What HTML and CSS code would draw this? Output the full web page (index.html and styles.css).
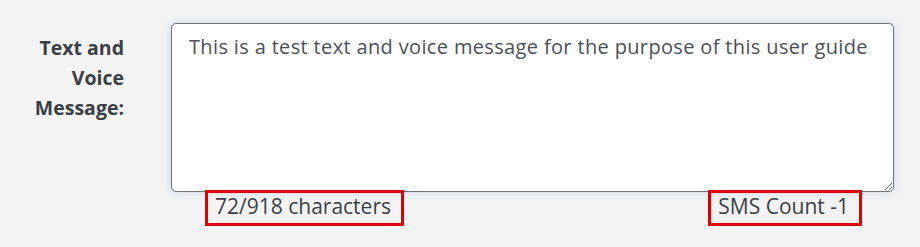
FILE: index.html
```html
<!DOCTYPE html>
<html lang="en">
	<head>
		<meta charset="UTF-8" />
		<title>Text and Voice Message</title>
		<link rel="stylesheet" href="styles.css">
	</head>
	<body>
		<div class="form-row">
			<label class="form-label" for="message">Text and Voice Message:</label>
			<div class="form-field">
				<textarea class="message-input" id="message">This is a test text and voice message for the purpose of this user guide</textarea>
				<div class="message-meta">
					<span class="meta-box">72/918 characters</span>
					<span class="meta-box">SMS Count -1</span>
				</div>
			</div>
		</div>
	</body>
</html>
```

FILE: styles.css
```css
html {
	box-sizing: border-box;
}

*,
*::after,
*::before {
	box-sizing: inherit;
}

body {
	margin: 0;
	padding: 0;
	background-color: #f4f4f4;
	font-family: "Open Sans", sans-serif;
	color: #3a3f47;
	-webkit-font-smoothing: antialiased;
}

.form-row {
	display: grid;
	grid-template-columns: 124px 723px;
	column-gap: 47px;
	padding-top: 23px;
}

.form-label {
	padding-top: 10px;
	text-align: right;
	font-size: 19.5px;
	font-weight: 700;
	line-height: 30px;
	color: #3a3f47;
}

.form-field {
	display: flex;
	flex-direction: column;
}

.message-input {
	display: block;
	width: 100%;
	height: 169px;
	margin: 0;
	padding: 10px 17px;
	font-family: inherit;
	font-size: 20px;
	line-height: 26px;
	letter-spacing: 0.35px;
	color: #4a4f57;
	background-color: #fff;
	border: 1px solid #6f7378;
	border-radius: 5px;
	box-shadow: 0 0 10px rgb(120 160 210 / 35%);
	resize: vertical;
	outline: none;
}

.message-meta {
	display: flex;
	justify-content: space-between;
	padding: 0 32px 0 34px;
	margin-top: -2px;
}

.meta-box {
	display: block;
	padding: 0 10px 3px 7px;
	border: 3px solid #e00000;
	font-size: 21px;
	line-height: 27px;
	color: #3a3f47;
}
```
